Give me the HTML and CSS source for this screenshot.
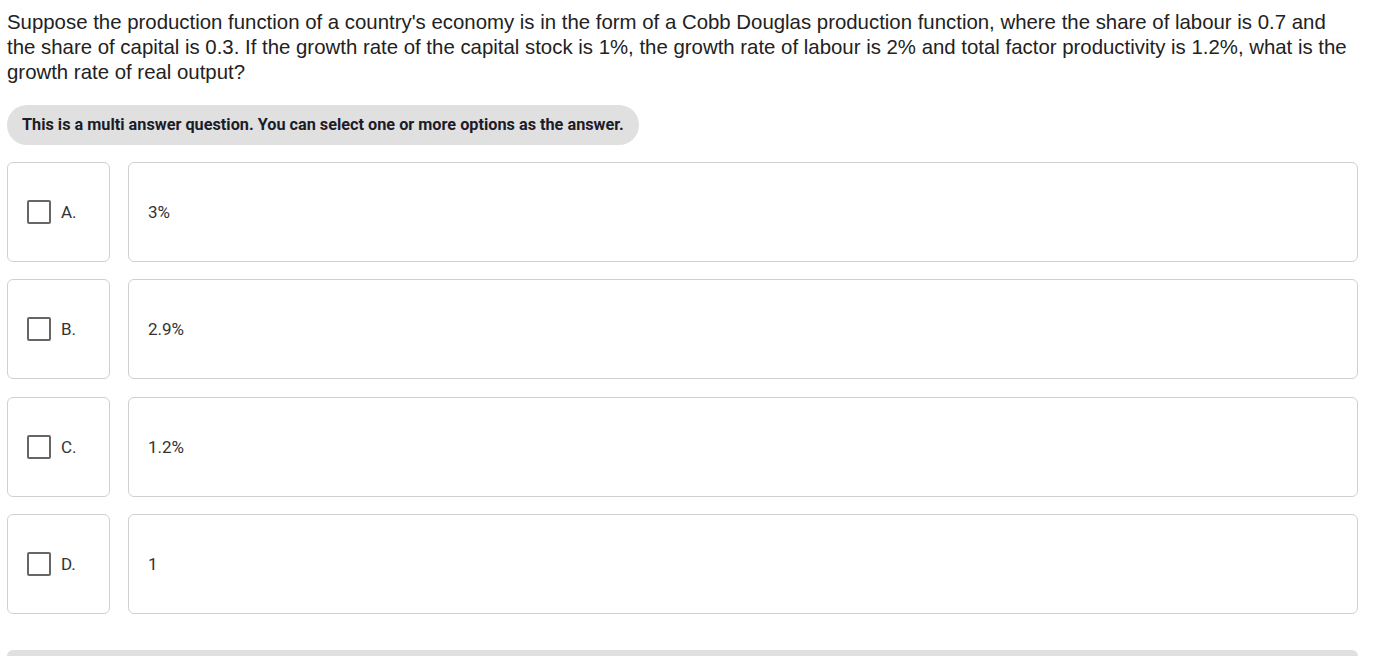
FILE: index.html
```html
<!DOCTYPE html>
<html>
<head>
<meta charset="utf-8">
<link rel="stylesheet" href="styles.css">
</head>
<body>
<div class="page">
  <p class="question">Suppose the production function of a country's economy is in the form of a Cobb Douglas production function, where the share of labour is 0.7 and the share of capital is 0.3. If the growth rate of the capital stock is 1%, the growth rate of labour is 2% and total factor productivity is 1.2%, what is the growth rate of real output?</p>
  <div class="pill">This is a multi answer question. You can select one or more options as the answer.</div>
  <div class="options">
    <div class="option">
      <div class="choice"><span class="box"></span><span class="letter">A.</span></div>
      <div class="answer">3%</div>
    </div>
    <div class="option">
      <div class="choice"><span class="box"></span><span class="letter">B.</span></div>
      <div class="answer">2.9%</div>
    </div>
    <div class="option">
      <div class="choice"><span class="box"></span><span class="letter">C.</span></div>
      <div class="answer">1.2%</div>
    </div>
    <div class="option">
      <div class="choice"><span class="box"></span><span class="letter">D.</span></div>
      <div class="answer">1</div>
    </div>
  </div>
  <div class="footer-bar"></div>
</div>
</body>
</html>
```
FILE: styles.css
```css
html, body {
  margin: 0;
  padding: 0;
  background: #ffffff;
  overflow: hidden;
  height: 656px;
}
.page {
  width: 1351px;
  padding: 7px 0 0 7px;
}
.question {
  margin: 3px 0 0 0;
  font-family: "Liberation Sans", Arial, sans-serif;
  font-size: 20.4px;
  line-height: 25px;
  color: #222222;
}
.pill {
  display: inline-block;
  margin-top: 20px;
  height: 40px;
  line-height: 40px;
  padding: 0 15px;
  border-radius: 20px;
  background: #e0e0e0;
  font-family: Roboto, sans-serif;
  font-weight: 700;
  font-size: 16.25px;
  color: #1c1c28;
}
.options {
  margin-top: 17px;
  display: flex;
  flex-direction: column;
  gap: 17.3px;
}
.option {
  display: flex;
  gap: 18px;
  height: 100px;
}
.choice, .answer {
  box-sizing: border-box;
  border: 1px solid #d0d0d0;
  border-radius: 6px;
  display: flex;
  align-items: center;
  font-family: Roboto, sans-serif;
  font-size: 17px;
  color: #333333;
}
.choice {
  width: 103px;
  padding-left: 19px;
  gap: 10px;
}
.box {
  box-sizing: border-box;
  width: 24px;
  height: 24px;
  border: 2px solid #666666;
  border-radius: 2px;
}
.letter {
  color: #333333;
}
.answer {
  flex: 1;
  padding-left: 19px;
}
.footer-bar {
  margin-top: 36px;
  height: 6px;
  border-radius: 8px 8px 0 0;
  background: #e0e0e0;
}
```
